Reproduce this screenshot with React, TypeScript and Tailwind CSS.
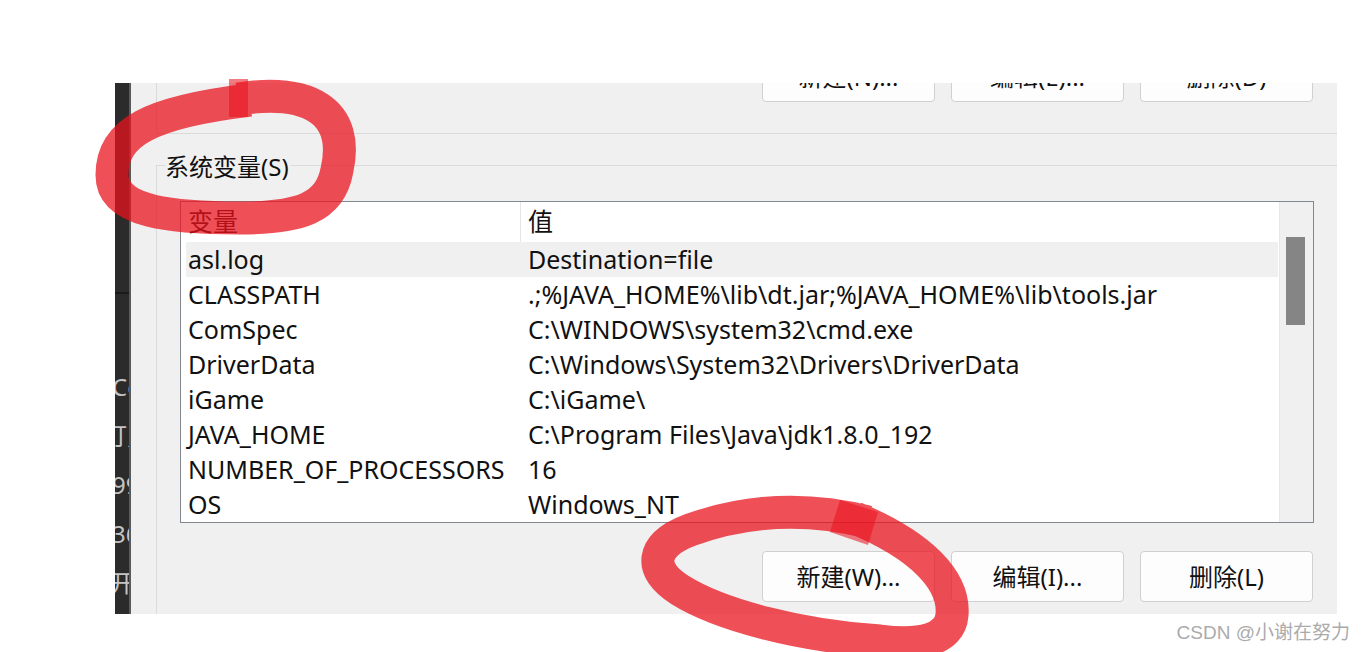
import React from "react";

const rows: [string, string][] = [
  ["asl.log", "Destination=file"],
  ["CLASSPATH", ".;%JAVA_HOME%\\lib\\dt.jar;%JAVA_HOME%\\lib\\tools.jar"],
  ["ComSpec", "C:\\WINDOWS\\system32\\cmd.exe"],
  ["DriverData", "C:\\Windows\\System32\\Drivers\\DriverData"],
  ["iGame", "C:\\iGame\\"],
  ["JAVA_HOME", "C:\\Program Files\\Java\\jdk1.8.0_192"],
  ["NUMBER_OF_PROCESSORS", "16"],
  ["OS", "Windows_NT"],
];

const font = { fontFamily: '"Noto Sans", "Noto Sans CJK SC", sans-serif' };

function Btn({ label }: { label: string }) {
  return (
    <div className="w-[173px] h-[51px] shrink-0 rounded-[4px] border border-[#d0d0d0] bg-[#fdfdfd] flex items-center justify-center text-[24px] text-[#111] leading-none">
      {label}
    </div>
  );
}

export default function App() {
  return (
    <div
      className="w-[1362px] h-[652px] bg-white relative overflow-hidden"
      style={font}
    >
      <div className="pt-[83px] pl-[115px]">
        <div className="w-[1222px] h-[531px] flex overflow-hidden">
          {/* dark strip */}
          <div className="w-[16px] shrink-0 flex">
            <div className="w-[14px] bg-[#2b2b2b] overflow-hidden flex flex-col">
              <div className="h-[209px] shrink-0" />
              <div className="h-[2px] bg-[#1a1a1a] shrink-0" />
              <div className="h-[68px] shrink-0" />
              <div className="-ml-[3px] flex flex-col text-[24px] leading-[49px] text-[#c4c4c4] whitespace-nowrap">
                <span>Co</span>
                <span className="-ml-[9px]">打几</span>
                <span>99</span>
                <span>36</span>
                <span className="-ml-[2px]">开</span>
              </div>
            </div>
            <div className="w-[2px] bg-[#5a5a5a]" />
          </div>

          {/* main panel */}
          <div className="flex-1 bg-[#f0f0f0] flex overflow-hidden">
            <div className="w-[25px] shrink-0" />
            <div className="flex-1 flex flex-col">
              {/* upper group (clipped) */}
              <div className="h-[51px] shrink-0 border-l border-b border-[#dadada]">
                <div className="-mt-[32px] pl-[605px] flex gap-[16px]">
                  <Btn label="新建(N)..." />
                  <Btn label="编辑(E)..." />
                  <Btn label="删除(D)" />
                </div>
              </div>
              <div className="h-[31px] shrink-0" />
              {/* system variables group */}
              <div className="flex-1 border-l border-t border-[#dadada] flex flex-col">
                <div className="-mt-[14px] ml-[8px] h-[30px] w-fit bg-[#f0f0f0] pr-[2px] text-[24px] leading-[30px] text-[#111]">
                  系统变量(S)
                </div>
                <div className="mt-[19px] ml-[23px] w-[1134px] h-[322px] shrink-0 border border-[#828790] bg-white flex">
                  <div className="flex-1 overflow-hidden flex flex-col text-[25px] text-[#111]">
                    <div className="h-[40px] shrink-0 flex">
                      <div className="w-[340px] shrink-0 border-r border-[#e5e5e5] pl-[7px] flex items-center">
                        变量
                      </div>
                      <div className="pl-[7px] flex items-center">值</div>
                    </div>
                    {rows.map(([k, v], i) => (
                      <div
                        key={k}
                        className={`ml-[5px] mr-[1px] h-[35px] shrink-0 flex items-center whitespace-nowrap ${
                          i === 0 ? "bg-[#f0f0f0]" : ""
                        }`}
                      >
                        <div className="w-[335px] shrink-0 pl-[2px]">{k}</div>
                        <div className="pl-[7px]">{v}</div>
                      </div>
                    ))}
                  </div>
                  <div className="w-[34px] shrink-0 bg-[#f0f0f0] border-l border-[#e8e8e8]">
                    <div className="mt-[35px] ml-[6px] w-[19px] h-[88px] bg-[#858585]" />
                  </div>
                </div>
                <div className="mt-[28px] ml-[23px] w-[1134px] pr-[1px] flex justify-end gap-[16px]">
                  <Btn label="新建(W)..." />
                  <Btn label="编辑(I)..." />
                  <Btn label="删除(L)" />
                </div>
              </div>
            </div>
          </div>
        </div>
      </div>

      {/* red hand-drawn annotations */}
      <svg
        className="absolute left-0 top-0 pointer-events-none"
        width="1362"
        height="652"
        viewBox="0 0 1362 652"
      >
        <g fill="none" stroke="rgba(233,17,29,0.74)" strokeWidth="33" strokeLinejoin="round">
          <path d="M 238 99 C 310 88, 350 112, 337 170 C 330 208, 300 218, 240 218 C 170 218, 112 212, 112 175 C 112 132, 150 112, 250 100" />
          <path d="M 855 518 C 920 545, 955 580, 952 615 C 950 640, 920 646, 880 641 C 800 636, 720 615, 680 590 C 648 570, 650 545, 690 530 C 740 512, 800 505, 868 522" />
        </g>
        <rect x="229" y="79" width="19" height="38" fill="rgba(233,17,29,0.55)" />
        <polygon points="840,500 878,512 868,545 830,532" fill="rgba(233,17,29,0.55)" />
      </svg>

      <div
        className="absolute right-[12px] bottom-[9px] text-[19px] leading-[20px] text-[#ababab] whitespace-nowrap"
        style={{ fontFamily: '"Liberation Sans", "Noto Sans CJK SC", sans-serif' }}
      >
        CSDN @小谢在努力
      </div>
    </div>
  );
}
